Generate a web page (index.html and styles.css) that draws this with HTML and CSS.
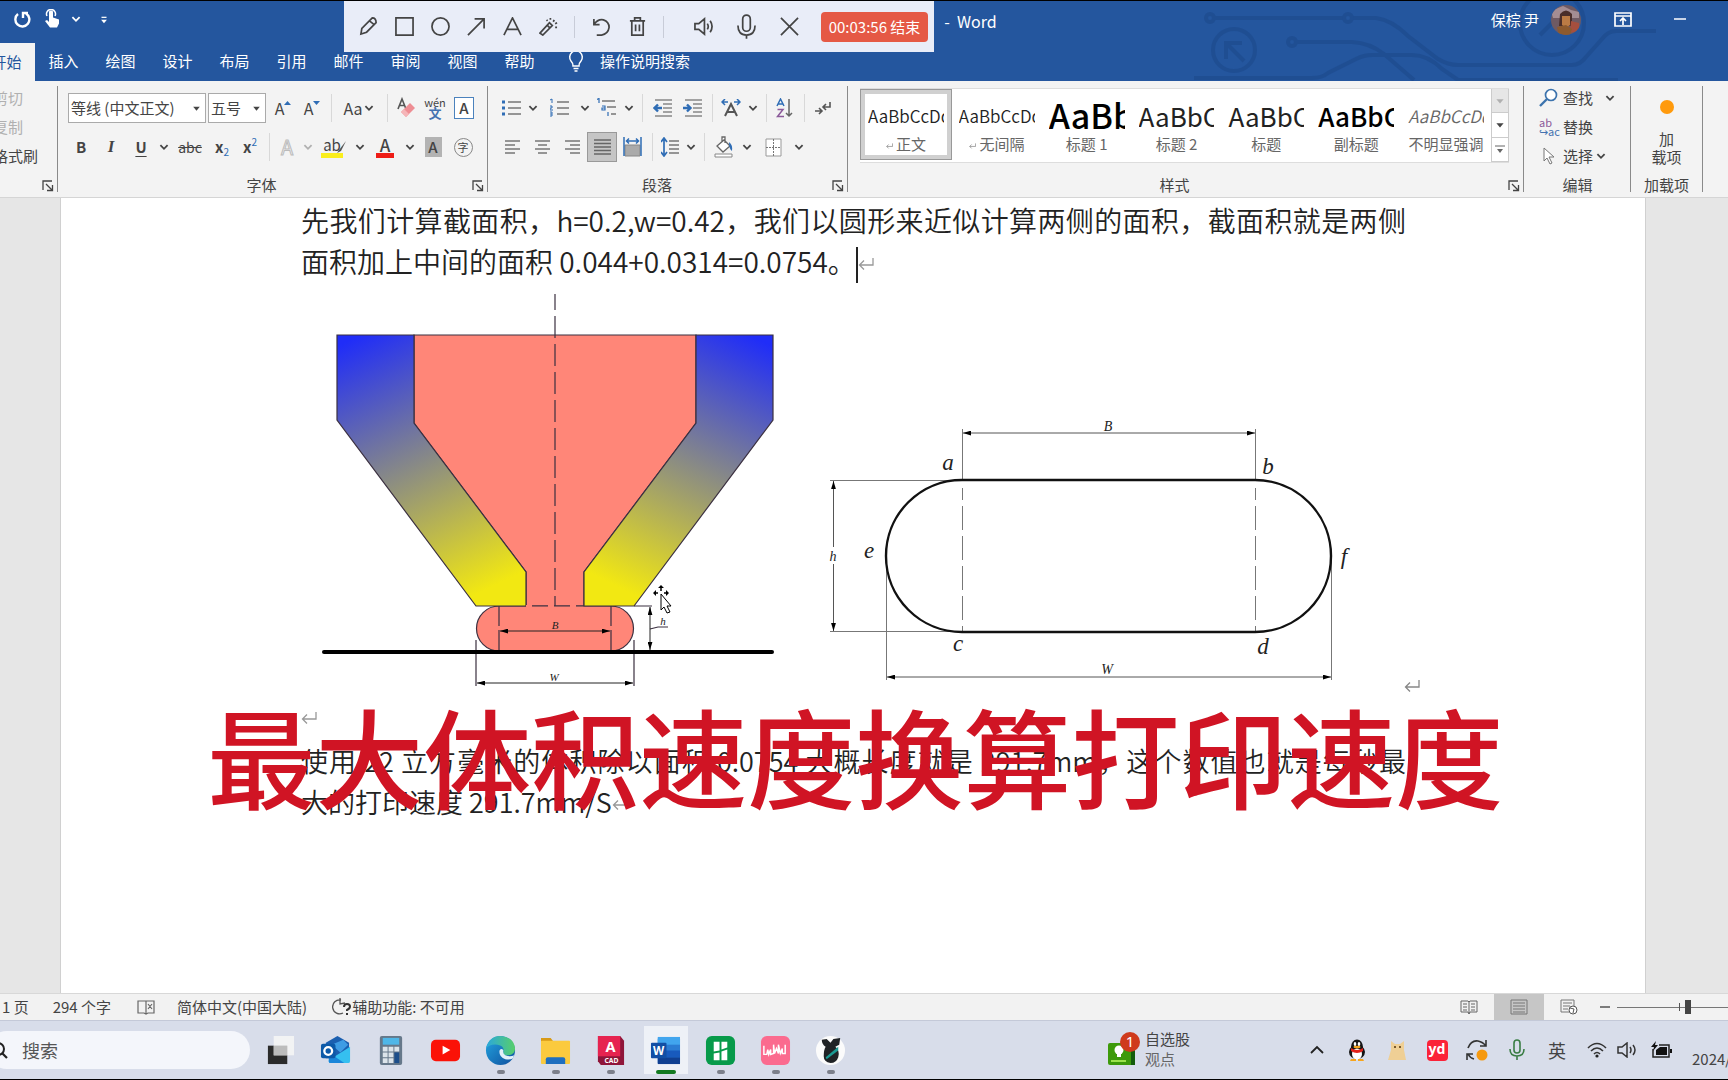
FILE: index.html
```html
<!DOCTYPE html>
<html lang="zh-CN">
<head>
  <meta charset="UTF-8">
  <meta name="viewport" content="width=device-width, initial-scale=1.0">
  <title>Word</title>
  <link rel="stylesheet" href="styles.css">
</head>
<body>
  <!-- shared icons -->
  <svg class="sprite" aria-hidden="true">
    <symbol id="chev" viewBox="0 0 10 10"><path d="M2 3.5l3 3 3-3" fill="none" stroke="currentColor" stroke-width="1.5"/></symbol>
    <symbol id="tri" viewBox="0 0 10 10"><path d="M2 3.5h6l-3 3.5z" fill="currentColor"/></symbol>
    <symbol id="ret" viewBox="0 0 16 16"><path d="M15 2v7H2M6 4.500L1.500 9 6 13.500" fill="none" stroke="currentColor" stroke-width="1.300"/></symbol>
    <symbol id="launch" viewBox="0 0 12 12"><path d="M1 10V1h9M4 4l6 6M10.500 5v5.500H5" fill="none" stroke="#444" stroke-width="1.300"/></symbol>
    <marker id="arrow" viewBox="0 0 10 6" refX="10" refY="3" markerWidth="8" markerHeight="5" markerUnits="userSpaceOnUse" orient="auto-start-reverse"><path d="M0 0l10 3-10 3z"/></marker>
  </svg>

  <header class="titlebar">
    <svg class="circuit" viewBox="0 0 540 80" aria-hidden="true">
      <g fill="none" stroke="#1b4788" stroke-width="4">
        <circle cx="22" cy="17" r="4"/><path d="M26 17h130M164 17h24q16 2 32 18l30 23q10 6 20 6h114q8 0 14-8l16-18q6-8 14-8h40"/>
        <circle cx="160" cy="17" r="4"/>
        <circle cx="104" cy="41" r="4"/><path d="M108 41h56q18 1 32 12l30 26"/>
        <path d="M6 77h118q10 0 16-5l28-14q8-4 16-4h40q16 0 30 14l16 11h160"/>
        <circle cx="46" cy="49" r="21"/><path d="M38 58V42h16M39 43l17 17"/>
        <circle cx="364" cy="22" r="32"/><path d="M352 34l24-24"/>
      </g>
    </svg>
    <div class="quick">
      <button aria-label="重复"><svg width="18" height="18" viewBox="0 0 18 18"><path d="M5 4a7 7 0 1 0 8-.5M10 8V3h5" fill="none" stroke="#fff" stroke-width="2.400"/></svg></button>
      <button aria-label="触摸模式"><svg width="18" height="20" viewBox="0 0 18 20"><path d="M6 2.500q2-2 4 0v6l6 2v4l-2 4H7L2 12l2-1 2 2z" fill="#fff"/><path d="M4 7a4.500 4.500 0 1 1 8 0" fill="none" stroke="#fff" stroke-width="1.500"/></svg></button>
      <button class="narrow" aria-label="触摸选项"><svg width="12" height="12"><use href="#chev"/></svg></button>
      <button aria-label="自定义快速访问工具栏"><svg width="10" height="14" viewBox="0 0 12 14"><path d="M3 5h6" stroke="#fff" stroke-width="1.500"/><path d="M2.500 8h7L6 12z" fill="#fff"/></svg></button>
    </div>
    <div class="doc-title">-&nbsp; Word</div>
    <div class="account">
      <span>保棕 尹</span>
      <svg class="avatar" width="30" height="30" viewBox="0 0 30 30"><clipPath id="face"><circle cx="15" cy="15" r="15"/></clipPath><g clip-path="url(#face)"><path fill="#6f5a63" d="M0 0h30v30H0z"/><path fill="#a48d93" d="M0 6l12-5 8 4 8 2v6H2z"/><path fill="#4a2e2a" d="M9 9q6-7 12 0v12H8z"/><path fill="#bb7b45" d="M11 11h8v9l-4 3-4-3z"/><path fill="#a64f3e" d="M20 16l8 2v8l-9 2z"/><path fill="#8d5a2e" d="M6 22l9-2 6 4-2 6H8z"/></g></svg>
    </div>
    <div class="window-buttons">
      <button aria-label="功能区显示选项"><svg width="18" height="15" viewBox="0 0 18 15"><path d="M1 1h16v13H1zM1 4h16M9 13V6M6 9l3-3 3 3" fill="none" stroke="#fff" stroke-width="1.700"/></svg></button>
      <button aria-label="最小化"><svg width="14" height="4" viewBox="0 0 14 4"><path d="M1 2h12" stroke="#fff" stroke-width="1.500"/></svg></button>
    </div>
  </header>

  <nav class="tabs">
    <button class="tab active">开始</button>
    <button class="tab">插入</button>
    <button class="tab">绘图</button>
    <button class="tab">设计</button>
    <button class="tab">布局</button>
    <button class="tab">引用</button>
    <button class="tab">邮件</button>
    <button class="tab">审阅</button>
    <button class="tab">视图</button>
    <button class="tab">帮助</button>
    <button class="tell-me"><svg width="18" height="22" viewBox="0 0 18 22"><path d="M6 16q0-3-2-5a6.300 6.300 0 1 1 10 0q-2 2-2 5zM6.500 18.500h5M7.500 21h3" fill="none" stroke="#fff" stroke-width="1.500"/></svg>操作说明搜索</button>
  </nav>

  <section class="ribbon">
    <div class="group clipboard">
      <div class="list">
        <button class="off">剪切</button>
        <button class="off">复制</button>
        <button>格式刷</button>
      </div>
      <svg class="launcher"><use href="#launch"/></svg>
    </div>

    <div class="group font">
      <div class="row first">
        <label class="combo family"><select aria-label="字体"><option>等线 (中文正文)</option></select><svg><use href="#tri"/></svg></label>
        <label class="combo size"><select aria-label="字号"><option>五号</option></select><svg><use href="#tri"/></svg></label>
        <button class="w30"><span class="grow">A</span><svg width="7" height="14" viewBox="0 0 7 14"><path d="M0 4l3.500-4L7 4z" fill="#2f6db5"/></svg></button>
        <button class="w28"><span class="grow">A</span><svg width="7" height="14" viewBox="0 0 7 14"><path d="M0 0h7L3.500 4z" fill="#2f6db5"/></svg></button>
        <i class="sep"></i>
        <button class="w46"><span class="grow">Aa</span><svg class="c"><use href="#chev"/></svg></button>
        <i class="sep"></i>
        <button class="w28" aria-label="清除格式"><svg width="20" height="22" viewBox="0 0 20 22"><path d="M2 12L6 2l4 10M3.500 8.500h5" fill="none" stroke="#555" stroke-width="1.600"/><path d="M5 15L14 6l5 5-9 9z" fill="#ee8d93"/><path d="M5 15l3-3 5 5-3 3z" fill="#f5b5b8"/></svg></button>
        <button class="w30 pinyin"><span>wén</span><b>文</b></button>
        <button class="w28"><span class="boxed">A</span></button>
      </div>
      <div class="row">
        <button class="w30"><b>B</b></button>
        <button class="w30"><b class="it">I</b></button>
        <button class="w30"><b class="un">U</b></button>
        <button class="w16"><svg class="c"><use href="#chev"/></svg></button>
        <button class="w36"><s>abc</s></button>
        <button class="w28"><b>x</b><sub>2</sub></button>
        <button class="w28"><b>x</b><sup>2</sup></button>
        <i class="sep"></i>
        <button class="w26"><span class="hollow">A</span></button>
        <button class="w16 off"><svg class="c"><use href="#chev"/></svg></button>
        <button class="w36" aria-label="突出显示"><span class="ink yellow">ab</span><svg class="pen" width="12" height="14" viewBox="0 0 12 14"><path d="M11 1L4 10l-2 3 4-2z" fill="#555"/></svg></button>
        <button class="w16"><svg class="c"><use href="#chev"/></svg></button>
        <button class="w34"><span class="ink red">A</span></button>
        <button class="w16"><svg class="c"><use href="#chev"/></svg></button>
        <button class="w30"><span class="shaded">A</span></button>
        <button class="w30"><span class="circled">字</span></button>
      </div>
      <div class="caption">字体</div>
      <svg class="launcher"><use href="#launch"/></svg>
    </div>

    <div class="group para">
      <div class="row first">
        <button class="w28" aria-label="项目符号"><svg width="19" height="18" viewBox="0 0 19 18"><path d="M6 3h13M6 9h13M6 15h13" stroke="#777" stroke-width="1.500"/><path d="M0 3h3M0 9h3M0 15h3" stroke="#2f6db5" stroke-width="3"/></svg></button>
        <button class="w16"><svg class="c"><use href="#chev"/></svg></button>
        <button class="w36" aria-label="编号"><svg width="19" height="20" viewBox="0 0 19 20"><path d="M7 4h12M7 10h12M7 16h12" stroke="#777" stroke-width="1.500"/><path d="M0 2l2-1v4M0 8h2v2H0v2h3M0 14h2v4H0M0 16h2" fill="none" stroke="#2f6db5"/></svg></button>
        <button class="w16"><svg class="c"><use href="#chev"/></svg></button>
        <button class="w28" aria-label="多级列表"><svg width="20" height="20" viewBox="0 0 20 20"><path d="M5 3h13M10 9h9M14 16h5" stroke="#777" stroke-width="1.500"/><path d="M0 1.500L2 .5V5M5 8h3v4H5v-2h3M11 14v4" fill="none" stroke="#2f6db5" stroke-width="1.200"/></svg></button>
        <button class="w16"><svg class="c"><use href="#chev"/></svg></button>
        <i class="sep"></i>
        <button class="w30" aria-label="减少缩进"><svg width="19" height="20" viewBox="0 0 19 20"><path d="M2 2h17M10 6h9M10 10h9M10 14h9M2 18h17" stroke="#888" stroke-width="1.500"/><path d="M9 10H2M5 6.500L1.500 10 5 13.500" fill="none" stroke="#2f6db5" stroke-width="2.400"/></svg></button>
        <button class="w30" aria-label="增加缩进"><svg width="19" height="20" viewBox="0 0 19 20"><path d="M2 2h17M10 6h9M10 10h9M10 14h9M2 18h17" stroke="#888" stroke-width="1.500"/><path d="M0 10h7M4 6.500L7.500 10 4 13.500" fill="none" stroke="#2f6db5" stroke-width="2.400"/></svg></button>
        <i class="sep"></i>
        <button class="w28" aria-label="中文版式"><svg width="20" height="18" viewBox="0 0 20 18"><path d="M4 17L10 5l6 12M6 13h8" fill="none" stroke="#555" stroke-width="2"/><path d="M7 3H1M4 0L1 3l3 3M13 3h6M16 0l3 3-3 3" fill="none" stroke="#2f6db5" stroke-width="1.500"/></svg></button>
        <button class="w16"><svg class="c"><use href="#chev"/></svg></button>
        <i class="sep"></i>
        <button class="w28" aria-label="排序"><svg width="18" height="20" viewBox="0 0 18 20"><path d="M1 8l3.500-7L8 8M2 6h5" fill="none" stroke="#2f6db5" stroke-width="1.500"/><path d="M1.500 11.500H7l-5.500 7H8" fill="none" stroke="#8b5a9a" stroke-width="1.500"/><path d="M13 1v17M10 15l3 3 3-3" fill="none" stroke="#666" stroke-width="1.500"/></svg></button>
        <i class="sep"></i>
        <button class="w28" aria-label="显示编辑标记"><svg width="18" height="18" viewBox="0 0 18 18"><path d="M16 3v5H9M12 5L9 8l3 3M1 12h7M5 9l3 3-3 3" fill="none" stroke="#555" stroke-width="1.600"/></svg></button>
      </div>
      <div class="row">
        <button class="w30" aria-label="左对齐"><svg width="15" height="14" viewBox="0 0 15 14"><path d="M0 1h15M0 5h10M0 9h15M0 13h10" stroke="#777" stroke-width="1.500"/></svg></button>
        <button class="w30" aria-label="居中"><svg width="15" height="14" viewBox="0 0 15 14"><path d="M0 1h15M3 5h9M0 9h15M3 13h9" stroke="#777" stroke-width="1.500"/></svg></button>
        <button class="w30" aria-label="右对齐"><svg width="15" height="14" viewBox="0 0 15 14"><path d="M0 1h15M5 5h10M0 9h15M5 13h10" stroke="#777" stroke-width="1.500"/></svg></button>
        <button class="w30 pressed" aria-label="两端对齐"><svg width="17" height="16" viewBox="0 0 17 16"><path d="M0 1h17M0 4.500h17M0 8h17M0 11.500h17M0 15h17" stroke="#666" stroke-width="1.300"/></svg></button>
        <button class="w30" aria-label="分散对齐"><svg width="19" height="20" viewBox="0 0 19 20"><path d="M2 8h15v11H2z" fill="#aaa" stroke="#888"/><path d="M1 0v19M18 0v19M4 4h11M6 1.500L3.500 4 6 6.500M13 1.500L15.500 4 13 6.500" fill="none" stroke="#2f6db5" stroke-width="1.500"/></svg></button>
        <i class="sep"></i>
        <button class="w26" aria-label="行距"><svg width="18" height="20" viewBox="0 0 18 20"><path d="M8 4h10M8 8h10M8 12h10M8 16h10" stroke="#777" stroke-width="1.500"/><path d="M3 1v18M0 5l3-4 3 4M0 15l3 4 3-4" fill="none" stroke="#2f6db5" stroke-width="1.700"/></svg></button>
        <button class="w16"><svg class="c"><use href="#chev"/></svg></button>
        <i class="sep"></i>
        <button class="w30" aria-label="底纹"><svg width="20" height="22" viewBox="0 0 20 22"><path d="M3 10l7-6 6 6-7 6zM8 6V1h3v6" fill="#fff" stroke="#666" stroke-width="1.300"/><path d="M15 6q4 3 3 9-3-2-3-9" fill="#2f6db5"/><path d="M1 18h17v3H1z" fill="#fff" stroke="#888"/></svg></button>
        <button class="w16"><svg class="c"><use href="#chev"/></svg></button>
        <button class="w36" aria-label="边框"><svg width="17" height="19" viewBox="0 0 17 19"><path d="M1 1h15v17H1z" fill="#fff" stroke="#999"/><path d="M8.500 1v17M1 9.500h15" stroke="#777" stroke-dasharray="2 1"/></svg></button>
        <button class="w16"><svg class="c"><use href="#chev"/></svg></button>
      </div>
      <div class="caption">段落</div>
      <svg class="launcher"><use href="#launch"/></svg>
    </div>

    <div class="group styles">
      <div class="gallery">
        <button class="style selected"><span class="sample">AaBbCcDd</span><span class="name"><svg><use href="#ret"/></svg> 正文</span></button>
        <button class="style"><span class="sample">AaBbCcDd</span><span class="name"><svg><use href="#ret"/></svg> 无间隔</span></button>
        <button class="style"><span class="sample h1">AaBb</span><span class="name">标题 1</span></button>
        <button class="style"><span class="sample h2">AaBbC</span><span class="name">标题 2</span></button>
        <button class="style"><span class="sample h2">AaBbC</span><span class="name">标题</span></button>
        <button class="style"><span class="sample h2 strong">AaBbC</span><span class="name">副标题</span></button>
        <button class="style"><span class="sample subtle">AaBbCcDd</span><span class="name">不明显强调</span></button>
        <div class="scroll">
          <button class="off" aria-label="向上"><svg class="c"><use href="#tri"/></svg></button>
          <button aria-label="向下"><svg class="c"><use href="#tri"/></svg></button>
          <button aria-label="其他"><svg width="12" height="12" viewBox="0 0 12 12"><path d="M1 3h10" stroke="#666"/><path d="M3 6h6l-3 4z" fill="#666"/></svg></button>
        </div>
      </div>
      <div class="caption">样式</div>
      <svg class="launcher"><use href="#launch"/></svg>
    </div>

    <div class="group editing">
      <div class="list">
        <button><svg width="19" height="19" viewBox="0 0 19 19"><circle cx="12" cy="7" r="5.500" fill="#fff" stroke="#3c73ad" stroke-width="1.700"/><path d="M8 11l-7 7" stroke="#3c73ad" stroke-width="2.400"/></svg>查找<svg class="c far"><use href="#chev"/></svg></button>
        <button><span class="swap"><em>ab</em><span>↪ac</span></span>替换</button>
        <button><svg width="19" height="19" viewBox="0 0 19 19"><path d="M5 2v13l3-3 3 6 2-1-3-6h5z" fill="#fff" stroke="#777"/></svg>选择<svg class="c near"><use href="#chev"/></svg></button>
      </div>
      <div class="caption">编辑</div>
    </div>

    <div class="group addins">
      <button><svg width="16" height="16" viewBox="0 0 16 16"><circle cx="8" cy="8" r="7" fill="#ff9a0c"/></svg><span>加<br>载项</span></button>
      <div class="caption">加载项</div>
    </div>
  </section>

  <main class="workspace">
    <article class="page">
      <p class="full">先我们计算截面积，h=0.2,w=0.42，我们以圆形来近似计算两侧的面积，截面积就是两侧</p>
      <p>面积加上中间的面积 0.044+0.0314=0.0754。<span class="caret"></span><svg class="mark"><use href="#ret"/></svg></p>
      <figure>
        <svg width="480" height="417" viewBox="301 283 480 417">
          <defs>
            <linearGradient id="heatL" gradientUnits="userSpaceOnUse" x1="340" y1="345" x2="465" y2="600"><stop offset="0" stop-color="#202df8"/><stop offset="1" stop-color="#f2e812"/></linearGradient>
            <linearGradient id="heatR" gradientUnits="userSpaceOnUse" x1="770" y1="345" x2="645" y2="600"><stop offset="0" stop-color="#202df8"/><stop offset="1" stop-color="#f2e812"/></linearGradient>
          </defs>
          <g stroke="#3b3040" stroke-width="1.200">
            <path d="M414 335h282v88L584 572v34h-58v-34L414 423z" fill="#ff8678"/>
            <path d="M499 606h112a22 22 0 0 1 0 45H499a22 22 0 0 1 0-45z" fill="#ff8678"/>
            <path d="M337 335h77v88l112 149v34h-50L337 420z" fill="url(#heatL)"/>
            <path d="M773 335h-77v88L584 572v34h50l139-186z" fill="url(#heatR)"/>
            <path d="M555 294v312" stroke-dasharray="22 6" stroke-dashoffset="6"/>
            <path d="M526 606h58" stroke="#ff8678" stroke-width="2" stroke-dasharray="6 16"/>
            <path d="M499 606v45M611 606v45" stroke-dasharray="20 4"/>
            <path d="M634 606h18M476 640v46M634 640v46M650 629l8-2h10" fill="none"/>
          </g>
          <g stroke="#222" stroke-width="1" marker-start="url(#arrow)">
            <path d="M500 631h110" marker-end="url(#arrow)"/>
            <path d="M650 607v43" marker-end="url(#arrow)"/>
            <path d="M477 683h156" marker-end="url(#arrow)"/>
          </g>
          <path d="M324 652h448" stroke="#000" stroke-width="4" stroke-linecap="round"/>
          <g class="dim small"><text x="555" y="629">B</text><text x="663" y="625">h</text><text x="554" y="681">W</text></g>
          <path d="M661 586v5M654 593h4M664 593h4" stroke="#000" stroke-width="1.500"/>
          <path d="M658 588l3-3 3 3zM656 590l-3 3 3 3zM666 590l3 3-3 3z"/>
          <path d="M661 594v16l3-3 3 6 3-1-3-6h4z" fill="#fff" stroke="#000"/>
        </svg>
        <svg width="626" height="417" viewBox="781 283 626 417">
          <g stroke="#777" stroke-width="1">
            <path d="M962.500 429v51M1255.500 429v51M830 480.500h132M830 631.500h132M886.500 556v124M1331.500 556v124"/>
            <path d="M962.500 488v143M1255.500 488v143" stroke-dasharray="24 6" stroke-dashoffset="12"/>
          </g>
          <g stroke="#555" stroke-width="1">
            <path d="M963 433h292" marker-start="url(#arrow)" marker-end="url(#arrow)"/>
            <path d="M887 677h444" marker-start="url(#arrow)" marker-end="url(#arrow)"/>
            <path d="M833.500 547v-66" marker-end="url(#arrow)"/>
            <path d="M833.500 564v67" marker-end="url(#arrow)"/>
          </g>
          <rect x="886" y="480" width="445" height="152" rx="76" fill="none" stroke="#111" stroke-width="2.400"/>
          <g class="dim"><text x="1108" y="431">B</text><text x="833" y="561">h</text><text x="1107" y="674">W</text></g>
          <g class="dim point"><text x="948" y="470">a</text><text x="1268" y="474">b</text><text x="869" y="558">e</text><text x="1344" y="564">f</text><text x="958" y="651">c</text><text x="1263" y="654">d</text></g>
          <use href="#ret" x="1404" y="677" width="16" height="18" color="#888"/>
        </svg>
      </figure>
      <p class="empty"><svg class="mark"><use href="#ret"/></svg></p>
      <div class="result">
        <p class="full">使用 22 立方毫米的体积除以面积 0.0754 大概长度就是 291.7mm，这个数值也就是每秒最</p>
        <p>大的打印速度 291.7mm/S<svg class="mark"><use href="#ret"/></svg></p>
      </div>
    </article>
    <div class="subtitle">最大体积速度换算打印速度</div>
  </main>

  <footer class="status">
    <span class="pages">1 页</span>
    <span class="words">294 个字</span>
    <svg class="proof" width="18" height="16" viewBox="0 0 18 16"><path d="M9 2v13M9 2H1v12h6l2 1 2-1h6V2zM11 5l4 5M15 5l-4 5" fill="none" stroke="#666" stroke-width="1.200"/></svg>
    <span class="lang">简体中文(中国大陆)</span>
    <span class="access"><svg width="20" height="18" viewBox="0 0 20 18"><path d="M9 2a7 7 0 1 0 2 13M8 0v6l5-1" fill="none" stroke="#555" stroke-width="1.300"/><path d="M12 9q0-3 3-3t3 2.500q0 2-3 3.500v1M15 15v2" fill="none" stroke="#333" stroke-width="2"/></svg>辅助功能: 不可用</span>
    <div class="views">
      <button aria-label="阅读视图"><svg width="18" height="16" viewBox="0 0 18 16"><path d="M1 2h7l1 1 1-1h7v11h-7l-1 2-1-2H1zM9 3v12M3 5h4M3 8h4M3 11h4M11 5h4M11 8h4M11 11h4" fill="none" stroke="#666"/></svg></button>
      <button class="on" aria-label="页面视图"><svg width="18" height="16" viewBox="0 0 18 16"><path d="M1 1h16v14H1zM3 4h12M3 7h12M3 10h12M3 13h12" fill="none" stroke="#777"/></svg></button>
      <button aria-label="Web 版式视图"><svg width="18" height="16" viewBox="0 0 18 16"><path d="M9 13H1V1h13v6M3 4h9M3 7h7M3 10h5" fill="none" stroke="#777"/><circle cx="13" cy="11" r="4" fill="#fff" stroke="#555"/><path d="M10 9l4 1-1 4" fill="none" stroke="#555"/></svg></button>
    </div>
    <button class="minus" aria-label="缩小"><svg width="10" height="4"><path d="M0 2h10" stroke="#555" stroke-width="1.500"/></svg></button>
    <input class="zoom" type="range" aria-label="缩放" value="49">
  </footer>

  <footer class="taskbar">
    <label class="search"><svg width="20" height="20" viewBox="0 0 20 20"><circle cx="10" cy="9" r="6" fill="none" stroke="#222" stroke-width="2"/><path d="M14 13l5 5" stroke="#222" stroke-width="2.200"/></svg><input type="text" placeholder="搜索"></label>
    <div class="apps">
      <button aria-label="任务视图"><svg viewBox="0 0 32 32"><path d="M3 11h20v19H3z" fill="#2b2b2b"/><path d="M9 1h21v20H9z" fill="#f5f5f5" opacity=".9"/><path d="M9 11h14v10H9z" fill="#bcbcbc"/></svg></button>
      <button aria-label="Outlook"><svg viewBox="0 0 32 32"><path d="M6 8L18 1l12 7v16H6z" fill="#1b5fb0"/><path d="M12 10l12-5 5 5-8 8z" fill="#3e9ce4"/><path d="M9 26l22-14v15q0 2-2 2H11q-2 0-2-3z" fill="#35bff0"/><path d="M9 18l16 11H11q-2 0-2-2z" fill="#1a86d9"/><rect x="1" y="9" width="15" height="15" rx="2" fill="#0c59a8"/><circle cx="8.500" cy="16.500" r="4" fill="none" stroke="#fff" stroke-width="2.400"/></svg></button>
      <button aria-label="计算器"><svg viewBox="0 0 32 32"><rect x="5" y="1" width="23" height="30" rx="2" fill="#66788a"/><path d="M8 3h17v7H8z" fill="#4fb7e8"/><path d="M8 12h5v5H8zM14 12h5v5h-5zM20 12h5v5h-5zM8 18h5v5H8zM14 18h5v5h-5zM8 24h5v5H8zM14 24h5v5h-5z" fill="#dce4ea"/><path d="M20 18h5v11h-5z" fill="#1c4e8a"/></svg></button>
      <button aria-label="YouTube"><svg viewBox="0 0 32 32"><rect x="1" y="5" width="30" height="22" rx="5" fill="#fb1207"/><path d="M13 11v9l8-4.500z" fill="#fff"/></svg></button>
      <button class="run" aria-label="Edge"><svg viewBox="0 0 32 32"><defs><linearGradient id="edge" x1="0" y1="0" x2="1" y2="1"><stop offset="0" stop-color="#23a6e0"/><stop offset="1" stop-color="#0f4f9e"/></linearGradient><linearGradient id="edge2"><stop offset="0" stop-color="#2aa7dd"/><stop offset="1" stop-color="#58cf6a"/></linearGradient></defs><circle cx="16" cy="16" r="15" fill="url(#edge)"/><path d="M1 14Q4 1 16 1q14 1 15 13 0 7-8 7-5 0-4-4 1-6-6-7Q5 9 1 14z" fill="url(#edge2)"/><path d="M15 16q-1 7 6 9 5 1 8-1l1-3q-4 2-9 0-3-2-2-5-2-3-4 0z" fill="#e3f0fa"/></svg></button>
      <button class="run" aria-label="文件资源管理器"><svg viewBox="0 0 32 32"><path d="M1 3h10l3 4H1z" fill="#d89a17"/><rect x="1" y="6" width="30" height="24" rx="1" fill="#fbca3e"/><path d="M6 30v-5q0-2 2-2h16q2 0 2 2v5z" fill="#1f6fbf"/></svg></button>
      <button class="run" aria-label="AutoCAD"><svg viewBox="0 0 32 32"><path d="M3 1h23l4 5v25H6L3 27z" fill="#8f1539"/><path d="M3 1h23v21H3z" fill="#e62350"/><text x="16" y="18" class="logo">A</text><text x="17" y="29" class="logo tiny">CAD</text></svg></button>
      <button class="run current" aria-label="Word"><svg viewBox="0 0 32 32"><rect x="8" y="2" width="23" height="28" rx="2" fill="#2b7cd3"/><path d="M8 2h23v8H8z" fill="#41a5ee"/><path d="M8 23h23v7H8z" fill="#103f91"/><path d="M8 16h23v7H8z" fill="#185abd"/><rect x="1" y="8" width="16" height="16" rx="1" fill="#124fa5"/><text x="9" y="21" class="logo w">W</text></svg></button>
      <button class="run" aria-label="绿色应用"><svg viewBox="0 0 32 32"><rect x="1" y="1" width="30" height="30" rx="6" fill="#079a4a"/><path d="M9 7h6v9l-6 1zM17 7h6v6l-6 2zM9 19l6-1v8H9zM17 17l6-2v11h-6z" fill="#fff"/></svg></button>
      <button class="run" aria-label="音频应用"><svg viewBox="0 0 32 32"><rect x="1" y="1" width="30" height="30" rx="6" fill="#fb6b8f"/><path d="M4 11v9h3l1-5 1 5 2-5v5l3-1v-9l1 9 2-5 2 5v-9l2 9 2-5v5h3v-9" fill="none" stroke="#fff" stroke-width="1.500"/></svg></button>
      <button class="run" aria-label="Orca"><svg viewBox="0 0 32 32"><circle cx="16" cy="16" r="15" fill="#fbfbfb"/><path d="M7 5l5-1 4 4 3-4 7-1-1 7-4 2q5 4 3 11-2 6-8 6-7-1-7-7 0-7 2-10-4-2-4-7z" fill="#202326"/><path d="M11 23L24 12v4l-12 9z" fill="#1b9a93"/></svg></button>
    </div>
    <button class="widget">
      <svg width="34" height="36" viewBox="0 0 34 36"><rect x="1" y="12" width="27" height="22" rx="2" fill="#3d9a0a"/><path d="M24 12h4v22h-4z" fill="#145c0b"/><circle cx="12" cy="19" r="4.500" fill="#fff"/><path d="M10 21h4v5h-4z" fill="#fff"/><path d="M4 30h15" stroke="#9be34c" stroke-width="2"/><circle cx="23" cy="11" r="10" fill="#cf3a1c"/><text x="23" y="16" class="logo badge">1</text></svg>
      <span>自选股<br><small>观点</small></span>
    </button>
    <div class="tray">
      <button aria-label="显示隐藏的图标"><svg width="16" height="10" viewBox="0 0 16 10"><path d="M2 8l6-6 6 6" fill="none" stroke="#222" stroke-width="1.800"/></svg></button>
      <button aria-label="QQ"><svg width="18" height="22" viewBox="0 0 18 22"><ellipse cx="9" cy="8" rx="6" ry="7.500" fill="#151515"/><ellipse cx="9" cy="13" rx="8" ry="7" fill="#151515"/><ellipse cx="9" cy="15" rx="5" ry="5.500" fill="#fff"/><path d="M3 9q6 4 12 0v3q-6 4-12 0z" fill="#e3231b"/><ellipse cx="9" cy="8" rx="3.500" ry="1.300" fill="#f7a51c"/><ellipse cx="7" cy="5" rx="1.300" ry="2" fill="#fff"/><ellipse cx="11" cy="5" rx="1.300" ry="2" fill="#fff"/><path d="M3 20h5v2H2zM10 20h5l1 2h-6z" fill="#f7a51c"/></svg></button>
      <button aria-label="猫"><svg width="20" height="22" viewBox="0 0 20 22"><path d="M4 2l4 3h5l4-3v9l2 10H1l3-10z" fill="#efcf95"/><path d="M7 8h2M12 8h2" stroke="#7a5a2c" stroke-width="2"/></svg></button>
      <button aria-label="有道"><svg width="21" height="21" viewBox="0 0 21 21"><rect width="21" height="21" rx="4" fill="#fb2338"/><text x="10" y="14" class="logo yd">yd</text></svg></button>
      <button aria-label="更新"><svg width="22" height="22" viewBox="0 0 22 22"><path d="M2 9Q5 1 12 2q5 1 8 5M20 1v6h-6M8 20q-4-1-6-5M1 21v-6h6" fill="none" stroke="#333" stroke-width="1.600"/><circle cx="16" cy="16" r="5.500" fill="#f6990f"/></svg></button>
      <button aria-label="麦克风"><svg width="16" height="22" viewBox="0 0 16 22"><rect x="5" y="1" width="6" height="13" rx="3" fill="none" stroke="#3a7d44" stroke-width="1.600"/><path d="M1 10q0 7 7 7t7-7M8 17v4" fill="none" stroke="#3a7d44" stroke-width="1.600"/></svg></button>
      <button class="ime">英</button>
      <button class="w30" aria-label="网络"><svg width="20" height="16" viewBox="0 0 20 16"><path d="M1 6q9-9 18 0M4 9q6-6 12 0M7 12q3-3 6 0" fill="none" stroke="#333" stroke-width="1.600"/><circle cx="10" cy="14" r="1.600" fill="#222"/></svg></button>
      <button class="w30" aria-label="音量"><svg width="20" height="16" viewBox="0 0 20 16"><path d="M1 5h4l5-4v14l-5-4H1zM13 5q2 3 0 6M16 3q4 5 0 10" fill="none" stroke="#333" stroke-width="1.500"/></svg></button>
      <button aria-label="电池"><svg width="22" height="18" viewBox="0 0 22 18"><path d="M2 8v8h16V4H8" fill="none" stroke="#222" stroke-width="1.500"/><path d="M5 9l4-3h7v8H5zM19 8h2v4h-2zM5 0L0 6h3L2 10l5-6H4z" fill="#111"/></svg></button>
      <time>2024/</time>
    </div>
  </footer>

  <!-- floating recorder -->
  <aside class="recorder">
    <button aria-label="画笔"><svg viewBox="0 0 20 20"><path d="M2 18l1-6L14 1q4 0 4 5L8 16zM11 4l5 4"/></svg></button>
    <button aria-label="矩形"><svg viewBox="0 0 20 20"><path d="M1 1h18v18H1z"/></svg></button>
    <button aria-label="椭圆"><svg viewBox="0 0 20 20"><circle cx="10" cy="10" r="9"/></svg></button>
    <button aria-label="箭头"><svg viewBox="0 0 20 20"><path d="M1 19L18 2M8 2h10v10"/></svg></button>
    <button aria-label="文字"><svg viewBox="0 0 20 20"><path d="M1 19L10 1l9 18M4 13h12"/></svg></button>
    <button aria-label="魔棒"><svg viewBox="0 0 20 20"><path d="M1 17L11 6l3 3L4 19zM9 9l3 3M12 1v2M16 3l-1 2M19 6l-2 1M17 11h2M8 3l1 1"/></svg></button>
    <i></i>
    <button aria-label="撤销"><svg viewBox="0 0 20 20"><path d="M2 2v6h6M2 8q4-6 10-5 6 2 6 8-1 7-8 8H5"/></svg></button>
    <button aria-label="删除"><svg viewBox="0 0 20 20"><path d="M2 4h16M7 4V1h6v3M4 4v15h12V4M8 8v7M12 8v7"/></svg></button>
    <i></i>
    <button class="wide" aria-label="声音"><svg viewBox="0 0 20 20"><path d="M1 7h4l6-5v16l-6-5H1zM14 7q2 3 0 6M17 4q4 6 0 12"/></svg></button>
    <button class="wide" aria-label="话筒"><svg class="tall" viewBox="0 0 20 26"><rect x="6" y="1" width="8" height="17" rx="4"/><path d="M1 12q0 10 9 10t9-10M10 22v4"/></svg></button>
    <button class="wide" aria-label="关闭"><svg viewBox="0 0 20 20"><path d="M1 1l18 18M19 1L1 19"/></svg></button>
    <button class="stop">00:03:56 结束</button>
  </aside>
</body>
</html>
```

FILE: styles.css
```css
:root {
  --blue: #24569e;
  --ribbon: #f3f3f3;
  --line: #8a8a8a;
  --text: #444;
}

* {
  box-sizing: border-box;
}

body {
  margin: 0;
  height: 100vh;
  display: flex;
  flex-direction: column;
  position: relative;
  overflow: hidden;
  border-top: 1px solid #000;
  border-bottom: 1px solid #000;
  font-family: "Noto Sans CJK SC", sans-serif;
  font-size: 15px;
  line-height: 20px;
  color: var(--text);
}

button {
  display: flex;
  align-items: center;
  justify-content: center;
  flex: none;
  padding: 0;
  border: 0;
  background: none;
  color: inherit;
  font: inherit;
  white-space: nowrap;
}

svg {
  flex: none;
}

.sprite {
  position: absolute;
  width: 0;
  height: 0;
}

/* Title bar */
.titlebar {
  display: flex;
  flex: none;
  height: 42px;
  background: var(--blue);
  color: #fff;
  position: relative;
  z-index: 1;
}

.circuit {
  position: absolute;
  top: 0;
  right: 0;
  width: 540px;
  height: 80px;
  opacity: 0.5;
}

.quick {
  display: flex;
  align-items: center;
  height: 36px;
  padding-left: 7px;
}

.quick button {
  width: 30px;
}

.quick .narrow {
  width: 18px;
  margin-right: 4px;
}

.doc-title {
  margin-left: auto;
  margin-right: 494px;
  line-height: 40px;
  font-size: 16px;
}

.account {
  display: flex;
  align-items: center;
  gap: 12px;
  height: 38px;
  position: relative;
}

.window-buttons {
  display: flex;
  height: 36px;
  padding: 0 20px 0 13px;
  position: relative;
}

.window-buttons button {
  width: 57px;
}

/* Tabs */
.tabs {
  display: flex;
  flex: none;
  height: 38px;
  padding-bottom: 2px;
  background: var(--blue);
  color: #fff;
}

.tab {
  width: 57px;
}

.tab.active {
  height: 38px;
  margin-left: -22px;
  background: var(--ribbon);
  color: var(--blue);
}

.tell-me {
  gap: 15px;
  margin-left: 19px;
}

/* Ribbon */
.ribbon {
  display: flex;
  flex: none;
  height: 117px;
  background: var(--ribbon);
  border-bottom: 1px solid #d5d5d5;
}

.group {
  display: flex;
  flex-direction: column;
  flex: none;
  margin: 5px 0;
  border-right: 1px solid var(--line);
  position: relative;
}

.clipboard {
  width: 65px;
  margin-left: -7px;
}

.font {
  width: 430px;
  padding: 7px 0 0 8px;
}

.para {
  width: 360px;
  padding: 7px 0 0 9px;
}

.styles {
  flex: 1;
  min-width: 0;
  padding: 2px 14px 0 12px;
}

.editing {
  width: 107px;
  padding-left: 15px;
}

.addins {
  width: 72px;
  margin-right: 25px;
}

.row {
  display: flex;
  align-items: center;
  height: 30px;
  margin-bottom: 9px;
}

.font .first {
  padding-left: 2px;
}

.row button {
  height: 30px;
}

.w16 { width: 16px; }
.w26 { width: 26px; }
.w28 { width: 28px; }
.w30 { width: 30px; }
.w34 { width: 34px; }
.w36 { width: 36px; }
.w46 { width: 46px; }

.c {
  width: 12px;
  height: 12px;
}

.sep {
  flex: none;
  width: 10px;
  height: 28px;
  background: linear-gradient(#d8d8d8, #d8d8d8) center / 1px 100% no-repeat;
}

.off {
  color: #b0b0b0;
}

.caption {
  margin-top: auto;
  line-height: 14px;
  text-align: center;
}

.font .caption,
.para .caption {
  padding-right: 30px;
}

.styles .caption {
  padding-right: 20px;
}

.editing .caption {
  padding-right: 14px;
}

.launcher {
  position: absolute;
  right: 3px;
  bottom: 0;
  width: 12px;
  height: 12px;
}

.list {
  margin-top: -3px;
}

.list button {
  height: 29px;
  gap: 5px;
  justify-content: flex-start;
}

.far {
  margin-left: 6px;
}

.near {
  margin-left: -3px;
}

.combo {
  display: flex;
  position: relative;
  height: 30px;
  border: 1px solid #aaa;
  background: #fff;
}

.family {
  width: 138px;
  margin-right: 2px;
}

.size {
  width: 58px;
  margin-right: 2px;
}

.combo select {
  appearance: none;
  width: 100%;
  padding: 0 2px;
  border: 0;
  background: none;
  color: inherit;
  font: inherit;
}

.combo svg {
  position: absolute;
  right: 3px;
  top: 9px;
  width: 11px;
  height: 11px;
}

.grow {
  font-size: 16px;
}

.pinyin {
  flex-direction: column;
  font-size: 11px;
  line-height: 9px;
}

.pinyin b {
  color: #4472b0;
  font-size: 13px;
  line-height: 12px;
}

.boxed {
  width: 20px;
  border: 1px solid #4b82bd;
  background: #fff;
  font-weight: 500;
}

.it {
  font-family: "Liberation Serif", serif;
  font-style: italic;
  font-size: 17px;
}

.un {
  text-decoration: underline;
  text-underline-offset: 3px;
}

sub,
sup {
  color: #2f6db5;
  font-size: 10px;
  line-height: 10px;
}

sub {
  margin-top: 10px;
}

sup {
  margin-bottom: 10px;
}

.row s {
  font-size: 14px;
}

.hollow {
  color: #f3f3f3;
  font-size: 20px;
  -webkit-text-stroke: 1px #bbb;
}

.ink {
  padding: 0 2px;
  border-bottom: 5px solid;
  line-height: 16px;
}

.yellow {
  border-color: #faee1c;
}

.red {
  border-color: #ee1c16;
  padding: 0 4px;
  font-size: 17px;
  font-weight: 500;
}

.pen {
  margin-left: -8px;
}

.shaded {
  width: 17px;
  background: #b3b3b3;
  font-weight: 500;
}

.circled {
  width: 19px;
  height: 19px;
  border: 1px solid #888;
  border-radius: 50%;
  font-size: 11px;
  line-height: 16px;
}

.pressed {
  border: 1px solid #999;
  background: #c5c5c5;
}

/* Style gallery */
.gallery {
  display: flex;
  height: 75px;
  background: #fff;
  border: 1px solid #ddd;
  border-width: 1px 0;
}

.style {
  flex: 1;
  min-width: 0;
  flex-direction: column;
  padding: 0 7px;
  height: 71px;
  overflow: hidden;
  color: #666;
}

.selected {
  border: 1px solid #999;
  box-shadow: inset 0 0 0 4px #d0d0d0;
}

.sample {
  width: 100%;
  height: 38px;
  overflow: hidden;
  text-align: left;
  font-size: 17px;
  font-weight: 350;
  line-height: 40px;
  color: #222;
}

.style .h1 {
  font-size: 34px;
  font-weight: 500;
  line-height: 38px;
  color: #000;
}

.style .h2 {
  font-size: 26px;
  font-weight: 400;
}

.style .strong {
  font-weight: 500;
  color: #000;
}

.style .subtle {
  font-style: italic;
  color: #666;
}

.name svg {
  width: 7px;
  height: 8px;
}

.scroll {
  display: flex;
  flex-direction: column;
  flex: none;
  width: 18px;
}

.scroll button {
  flex: 1;
  border: 1px solid #ccc;
  border-width: 0 1px 1px;
}

.scroll .off {
  background: #e6e6e6;
}

.swap {
  width: 19px;
  font-size: 11px;
  line-height: 9px;
  text-align: left;
  color: #4472b0;
}

.swap em {
  display: block;
  font-style: normal;
  color: #8b5a9a;
}

.addins button {
  flex-direction: column;
  gap: 15px;
  padding-top: 13px;
  line-height: 18px;
}

/* Document */
.workspace {
  flex: 1;
  min-height: 0;
  padding: 0 82px 0 60px;
  background: #e6e6e6;
  position: relative;
}

.page {
  height: 100%;
  padding: 2px 239px 0 240px;
  background: #fff;
  border: 1px solid #d0d0d0;
  border-width: 0 1px;
  color: #222;
  font-size: 28px;
  font-weight: 350;
  line-height: 41px;
}

.page p {
  margin: 0;
  height: 41px;
  white-space: nowrap;
}

.page .full {
  text-align: justify;
  text-align-last: justify;
  white-space: normal;
}

.page .empty {
  height: 40px;
  line-height: 30px;
}

.result {
  font-size: 27px;
}

.page figure {
  display: flex;
  margin: 0;
  padding-top: 1px;
}

.page figure svg {
  overflow: visible;
}

.caret {
  display: inline-block;
  width: 2px;
  height: 36px;
  background: #222;
  vertical-align: middle;
}

.mark {
  width: 16px;
  height: 18px;
  color: #999;
}

.dim {
  font-family: "Liberation Serif", serif;
  font-style: italic;
  font-size: 14px;
  font-weight: 400;
  text-anchor: middle;
  fill: #222;
}

.small {
  font-size: 11px;
}

.point {
  font-size: 23px;
}

.subtitle {
  position: absolute;
  left: 12%;
  top: 476px;
  color: #d01424;
  font-size: 108px;
  font-weight: 500;
  line-height: 160px;
  white-space: nowrap;
}

/* Status bar */
.status {
  display: flex;
  align-items: center;
  flex: none;
  height: 27px;
  background: #f2f2f2;
  border-top: 1px solid #d8d8d8;
  white-space: nowrap;
}

.pages {
  padding-left: 2px;
}

.words {
  margin-left: 24px;
}

.proof {
  margin-left: 26px;
}

.lang {
  margin-left: 22px;
}

.access {
  display: flex;
  align-items: center;
  margin-left: 25px;
}

.views {
  display: flex;
  align-self: stretch;
  margin-left: auto;
}

.views button {
  width: 50px;
}

.on {
  background: #c6c6c6;
}

.minus {
  margin: 0 7px 0 6px;
}

.zoom {
  appearance: none;
  width: 144px;
  height: 16px;
  margin: 0 -33px 0 0;
  background:
    linear-gradient(#555, #555) 62px center / 1px 8px no-repeat,
    linear-gradient(#777, #777) center / 100% 1px no-repeat;
}

.zoom::-webkit-slider-thumb {
  appearance: none;
  width: 6px;
  height: 14px;
  background: #444;
}

/* Taskbar */
.taskbar {
  display: flex;
  align-items: center;
  flex: none;
  height: 59px;
  background: #d8ddea;
  border-top: 1px solid #c4c9d8;
  overflow: hidden;
}

.search {
  display: flex;
  align-items: center;
  gap: 12px;
  flex: none;
  width: 262px;
  height: 38px;
  margin-left: -12px;
  border-radius: 19px;
  background: #f4f6fb;
}

.search input {
  width: 180px;
  border: 0;
  background: none;
  font: inherit;
  font-size: 18px;
}

.search input::placeholder {
  color: #555;
}

.apps {
  display: flex;
  flex: none;
  margin-left: 3px;
}

.apps button {
  width: 55px;
  height: 55px;
  position: relative;
}

.apps svg {
  width: 31px;
  height: 31px;
}

.apps .run::after {
  content: "";
  position: absolute;
  bottom: 4px;
  width: 8px;
  height: 4px;
  border-radius: 2px;
  background: #7c808a;
}

.apps .current {
  background: linear-gradient(#eef1f7, #eef1f7) center / 44px 48px no-repeat;
}

.apps .current::after {
  width: 20px;
  background: #137a21;
}

.logo {
  fill: #fff;
  font-family: "Noto Sans", sans-serif;
  font-size: 15px;
  font-weight: 700;
  text-anchor: middle;
}

.tiny {
  font-size: 7px;
}

.logo.w {
  font-size: 12px;
}

.badge {
  font-weight: 400;
}

.yd {
  font-size: 14px;
}

.widget {
  gap: 4px;
  margin-left: auto;
  padding-bottom: 2px;
  text-align: left;
}

.widget small {
  font-size: 15px;
  color: #666;
}

.tray {
  display: flex;
  align-items: center;
  margin-left: 107px;
}

.tray button {
  width: 40px;
}

.tray .w30 {
  width: 30px;
}

.tray .ime {
  font-size: 18px;
}

.tray .ime + .w30 {
  margin-left: 5px;
}

.tray time {
  width: 36px;
  padding-top: 18px;
  margin-left: 10px;
}

/* Recorder */
.recorder {
  position: absolute;
  z-index: 2;
  top: 0;
  left: 344px;
  display: flex;
  align-items: center;
  width: 590px;
  height: 51px;
  padding: 0 6px;
  background: #e9edf8;
}

.recorder button {
  width: 36px;
  height: 30px;
}

.recorder .wide {
  width: 43px;
}

.recorder svg {
  width: 19px;
  height: 19px;
  fill: none;
  stroke: #444;
  stroke-width: 1.8px;
}

.recorder .tall {
  height: 25px;
}

.recorder i {
  width: 17px;
  height: 22px;
  background: linear-gradient(#c8ccd8, #c8ccd8) center / 1px 100% no-repeat;
}

.recorder i + .wide {
  margin-left: 10px;
}

.recorder .stop {
  width: 107px;
  margin-left: auto;
  border-radius: 4px;
  background: #e55945;
  color: #fff;
}
```
